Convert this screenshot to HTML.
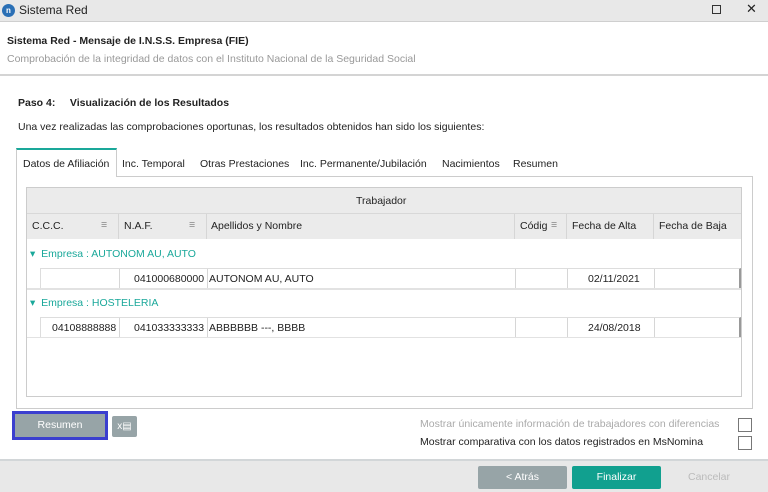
<!DOCTYPE html>
<html><head><meta charset="utf-8"><style>
*{box-sizing:border-box;margin:0;padding:0}
body{width:768px;height:492px;overflow:hidden;background:#fff;font-family:"Liberation Sans",sans-serif;font-size:10.5px;color:#222;position:relative}
.a{position:absolute;white-space:nowrap}
.teal{color:#1aa89a}
.c{position:absolute;border-right:1px solid #d6d6d6;height:100%;top:0}
</style></head><body>
<div class="a" style="left:0;top:0;width:768px;height:22px;background:#e8e8e8;border-bottom:1px solid #cfcfcf"></div>
<div class="a" style="left:2px;top:4px;width:13px;height:13px;border-radius:50%;background:#2a6fb5;color:#fff;font-size:8px;text-align:center;line-height:13px;font-weight:bold">n</div>
<div class="a" style="left:19px;top:3px;font-size:12px">Sistema Red</div>
<div class="a" style="left:712px;top:5px;width:9px;height:9px;border:1px solid #333"></div>
<div class="a" style="left:746px;top:1px;font-size:13px">✕</div>
<div class="a" style="left:7px;top:35px;font-weight:bold;font-size:10.5px">Sistema Red - Mensaje de I.N.S.S. Empresa (FIE)</div>
<div class="a" style="left:7px;top:53px;color:#999">Comprobación de la integridad de datos con el Instituto Nacional de la Seguridad Social</div>
<div class="a" style="left:0;top:74px;width:768px;height:2px;background:#d4d4d4"></div>
<div class="a" style="left:18px;top:97px;font-weight:bold">Paso 4:&nbsp;&nbsp;&nbsp;&nbsp;&nbsp;Visualización de los Resultados</div>
<div class="a" style="left:18px;top:121px">Una vez realizadas las comprobaciones oportunas, los resultados obtenidos han sido los siguientes:</div>
<div class="a" style="left:16px;top:148px;width:101px;height:29px;border:1px solid #ccc;border-top:2px solid #1aa89a;border-bottom:none;background:#fff;z-index:2"></div>
<div class="a" style="left:23px;top:158px;z-index:3">Datos de Afiliación</div>
<div class="a" style="left:122px;top:158px">Inc. Temporal</div>
<div class="a" style="left:200px;top:158px">Otras Prestaciones</div>
<div class="a" style="left:300px;top:158px">Inc. Permanente/Jubilación</div>
<div class="a" style="left:442px;top:158px">Nacimientos</div>
<div class="a" style="left:513px;top:158px">Resumen</div>
<div class="a" style="left:16px;top:176px;width:737px;height:233px;border:1px solid #ccc"></div>
<div class="a" style="left:26px;top:187px;width:716px;height:210px;border:1px solid #ccc"></div>
<div class="a" style="left:27px;top:188px;width:714px;height:26px;background:#ebebeb;border-bottom:1px solid #d8d8d8"></div>
<div class="a" style="left:356px;top:195px">Trabajador</div>
<div class="a" style="left:27px;top:214px;width:714px;height:25px;background:#ebebeb">
<div class="c" style="left:91px"></div><div class="c" style="left:179px"></div><div class="c" style="left:487px"></div><div class="c" style="left:539px"></div><div class="c" style="left:626px"></div>
<div class="a" style="left:5px;top:6px">C.C.C.</div><div class="a" style="left:74px;top:5px;color:#888">≡</div>
<div class="a" style="left:97px;top:6px">N.A.F.</div><div class="a" style="left:162px;top:5px;color:#888">≡</div>
<div class="a" style="left:184px;top:6px">Apellidos y Nombre</div>
<div class="a" style="left:493px;top:6px">Códig</div><div class="a" style="left:524px;top:5px;color:#888">≡</div>
<div class="a" style="left:545px;top:6px">Fecha de Alta</div>
<div class="a" style="left:632px;top:6px">Fecha de Baja</div>
</div>
<div class="a teal" style="left:30px;top:248px">▾&nbsp; Empresa : AUTONOM AU, AUTO</div>
<div class="a" style="left:40px;top:268px;width:701px;height:20px;border-top:1px solid #ddd;border-left:1px solid #ddd;border-right:2px solid #999">
<div class="c" style="left:78px"></div><div class="c" style="left:166px"></div><div class="c" style="left:474px"></div><div class="c" style="left:526px"></div><div class="c" style="left:613px"></div>
<div class="a" style="left:93px;top:4px">041000680000</div>
<div class="a" style="left:168px;top:4px">AUTONOM AU, AUTO</div>
<div class="a" style="left:547px;top:4px">02/11/2021</div></div>
<div class="a" style="left:27px;top:288px;width:714px;height:2px;background:#e2e2e2"></div>
<div class="a teal" style="left:30px;top:297px">▾&nbsp; Empresa : HOSTELERIA</div>
<div class="a" style="left:40px;top:317px;width:701px;height:20px;border-top:1px solid #ddd;border-left:1px solid #ddd;border-right:2px solid #999">
<div class="c" style="left:78px"></div><div class="c" style="left:166px"></div><div class="c" style="left:474px"></div><div class="c" style="left:526px"></div><div class="c" style="left:613px"></div>
<div class="a" style="left:11px;top:4px">04108888888</div>
<div class="a" style="left:93px;top:4px">041033333333</div>
<div class="a" style="left:168px;top:4px">ABBBBBB ---, BBBB</div>
<div class="a" style="left:547px;top:4px">24/08/2018</div></div>
<div class="a" style="left:27px;top:337px;width:714px;height:1px;background:#e2e2e2"></div>
<div class="a" style="left:12px;top:411px;width:96px;height:29px;border:3px solid #3b3fcf;background:#97a4a7;color:#fff;text-align:center;line-height:23px">Resumen</div>
<div class="a" style="left:112px;top:416px;width:25px;height:21px;background:#97a4a7;border-radius:2px;color:#fff;font-size:10px;text-align:center;line-height:21px">x▤</div>
<div class="a" style="left:420px;top:418px;color:#aaa">Mostrar únicamente información de trabajadores con diferencias</div>
<div class="a" style="left:420px;top:436px">Mostrar comparativa con los datos registrados en MsNomina</div>
<div class="a" style="left:738px;top:418px;width:14px;height:14px;border:1px solid #777;background:#fff"></div>
<div class="a" style="left:738px;top:436px;width:14px;height:14px;border:1px solid #777;background:#fff"></div>
<div class="a" style="left:0;top:459px;width:768px;height:33px;background:#e8e8e8;border-top:2px solid #d2d6d8"></div>
<div class="a" style="left:478px;top:466px;width:89px;height:23px;background:#97a4a7;color:#fff;text-align:center;line-height:22px;border-radius:2px">&lt; Atrás</div>
<div class="a" style="left:572px;top:466px;width:89px;height:23px;background:#11a08f;color:#fff;text-align:center;line-height:22px;border-radius:2px">Finalizar</div>
<div class="a" style="left:688px;top:471px;color:#bbb">Cancelar</div>
</body></html>
